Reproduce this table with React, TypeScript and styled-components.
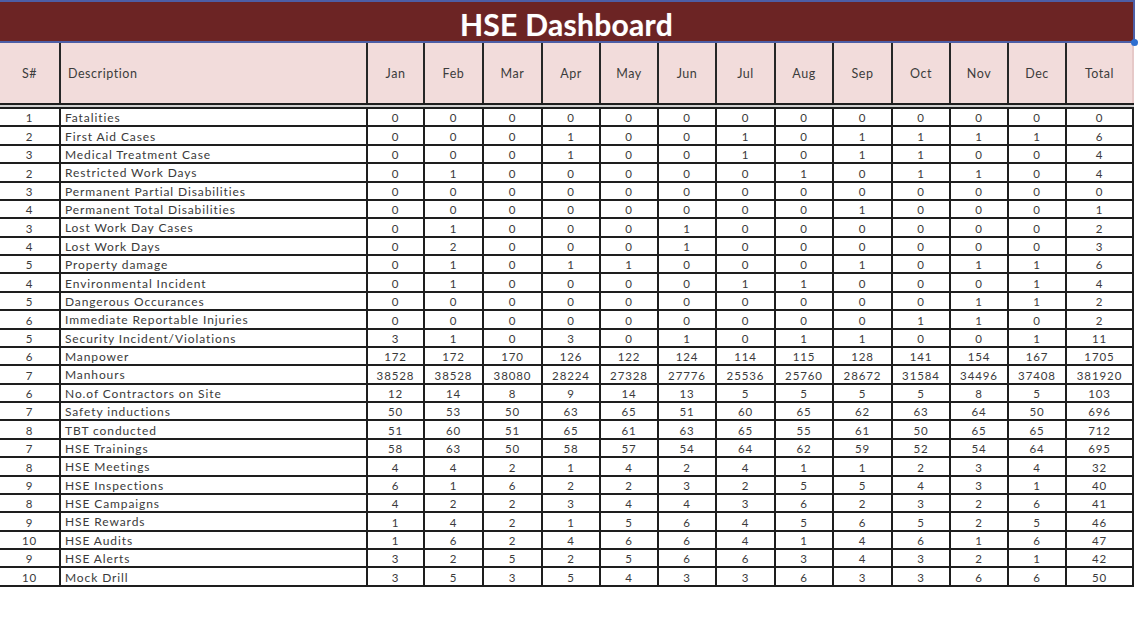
import React from "react";
import styled, { createGlobalStyle } from "styled-components";

const GlobalStyle = createGlobalStyle`
  html, body { margin: 0; padding: 0; background: #ffffff; }
  * { box-sizing: border-box; }
  body { font-family: Lato, "Open Sans", "Liberation Sans", sans-serif; }
`;

const COLS = "61px 307px 57px 59px 59px 58px 58px 58px 59px 58px 59px 58px 58px 58px 67px";

const Page = styled.div`
  position: relative;
  width: 1140px;
  height: 617px;
  background: #fff;
`;

const TitleBar = styled.div`
  width: 1135px;
  height: 43px;
  background: #6c2424;
  border-top: 2px solid #4d5ea6;
  border-bottom: 2px solid #4d5ea6;
  border-right: 2px solid #4d5ea6;
  display: flex;
  align-items: center;
  justify-content: center;
  padding-top: 4px;
  padding-left: 0;
`;

const Title = styled.h1`
  margin: 0;
  font-family: Lato, "Open Sans", sans-serif;
  font-weight: 700;
  font-size: 30px;
  color: #ffffff;
  letter-spacing: 0.3px;
  line-height: 1;
  text-shadow: 0 0 1px rgba(255, 255, 255, 0.4);
`;

const Handle = styled.span`
  position: absolute;
  left: 1131px;
  top: 39px;
  width: 7px;
  height: 7px;
  border-radius: 50%;
  background: #2f6fd0;
`;

const Table = styled.div`
  width: 1134px;
`;

const HeaderRow = styled.div`
  display: grid;
  grid-template-columns: ${COLS};
  height: 62px;
  background: #f2dcdb;
  border-bottom: 2px solid #1e1e1e;
`;

const HeadCell = styled.div<{ $left?: boolean }>`
  display: flex;
  align-items: center;
  justify-content: ${(p) => (p.$left ? "flex-start" : "center")};
  padding-left: ${(p) => (p.$left ? "7px" : "0")};
  padding-top: 1px;
  border-right: 2px solid #262626;
  font-size: 12.5px;
  letter-spacing: 0.55px;
  color: #3c3c3c;
  &:last-child { border-right: 2px solid #e6c9c8; }
`;

const Gap = styled.div`
  height: 2px;
  background: #cfcfcf;
`;

const Body = styled.div`
  border-top: 2px solid #1e1e1e;
`;

const Row = styled.div`
  display: grid;
  grid-template-columns: ${COLS};
  height: 18.38px;
  border-bottom: 2px solid #1e1e1e;
`;

const Cell = styled.div<{ $left?: boolean }>`
  display: flex;
  align-items: center;
  justify-content: ${(p) => (p.$left ? "flex-start" : "center")};
  padding-left: ${(p) => (p.$left ? "4px" : "0")};
  padding-top: 2px;
  border-right: 2px solid #1e1e1e;
  font-size: ${(p) => (p.$left ? "12px" : "11.5px")};
  letter-spacing: ${(p) => (p.$left ? "0.9px" : "0.9px")};
  color: #3a3a3a;
  white-space: nowrap;
  overflow: hidden;
  line-height: 1;
`;

const months = ["Jan", "Feb", "Mar", "Apr", "May", "Jun", "Jul", "Aug", "Sep", "Oct", "Nov", "Dec"];

type R = [number, string, number[], number];

const rows: R[] = [
  [1, "Fatalities", [0, 0, 0, 0, 0, 0, 0, 0, 0, 0, 0, 0], 0],
  [2, "First Aid Cases", [0, 0, 0, 1, 0, 0, 1, 0, 1, 1, 1, 1], 6],
  [3, "Medical Treatment Case", [0, 0, 0, 1, 0, 0, 1, 0, 1, 1, 0, 0], 4],
  [2, "Restricted Work Days", [0, 1, 0, 0, 0, 0, 0, 1, 0, 1, 1, 0], 4],
  [3, "Permanent Partial Disabilities", [0, 0, 0, 0, 0, 0, 0, 0, 0, 0, 0, 0], 0],
  [4, "Permanent Total Disabilities", [0, 0, 0, 0, 0, 0, 0, 0, 1, 0, 0, 0], 1],
  [3, "Lost Work Day Cases", [0, 1, 0, 0, 0, 1, 0, 0, 0, 0, 0, 0], 2],
  [4, "Lost Work Days", [0, 2, 0, 0, 0, 1, 0, 0, 0, 0, 0, 0], 3],
  [5, "Property damage", [0, 1, 0, 1, 1, 0, 0, 0, 1, 0, 1, 1], 6],
  [4, "Environmental Incident", [0, 1, 0, 0, 0, 0, 1, 1, 0, 0, 0, 1], 4],
  [5, "Dangerous Occurances", [0, 0, 0, 0, 0, 0, 0, 0, 0, 0, 1, 1], 2],
  [6, "Immediate Reportable Injuries", [0, 0, 0, 0, 0, 0, 0, 0, 0, 1, 1, 0], 2],
  [5, "Security Incident/Violations", [3, 1, 0, 3, 0, 1, 0, 1, 1, 0, 0, 1], 11],
  [6, "Manpower", [172, 172, 170, 126, 122, 124, 114, 115, 128, 141, 154, 167], 1705],
  [7, "Manhours", [38528, 38528, 38080, 28224, 27328, 27776, 25536, 25760, 28672, 31584, 34496, 37408], 381920],
  [6, "No.of Contractors on Site", [12, 14, 8, 9, 14, 13, 5, 5, 5, 5, 8, 5], 103],
  [7, "Safety inductions", [50, 53, 50, 63, 65, 51, 60, 65, 62, 63, 64, 50], 696],
  [8, "TBT conducted", [51, 60, 51, 65, 61, 63, 65, 55, 61, 50, 65, 65], 712],
  [7, "HSE Trainings", [58, 63, 50, 58, 57, 54, 64, 62, 59, 52, 54, 64], 695],
  [8, "HSE Meetings", [4, 4, 2, 1, 4, 2, 4, 1, 1, 2, 3, 4], 32],
  [9, "HSE Inspections", [6, 1, 6, 2, 2, 3, 2, 5, 5, 4, 3, 1], 40],
  [8, "HSE Campaigns", [4, 2, 2, 3, 4, 4, 3, 6, 2, 3, 2, 6], 41],
  [9, "HSE Rewards", [1, 4, 2, 1, 5, 6, 4, 5, 6, 5, 2, 5], 46],
  [10, "HSE Audits", [1, 6, 2, 4, 6, 6, 4, 1, 4, 6, 1, 6], 47],
  [9, "HSE Alerts", [3, 2, 5, 2, 5, 6, 6, 3, 4, 3, 2, 1], 42],
  [10, "Mock Drill", [3, 5, 3, 5, 4, 3, 3, 6, 3, 3, 6, 6], 50],
];

export default function App() {
  return (
    <>
      <GlobalStyle />
      <Page>
        <TitleBar>
          <Title>HSE Dashboard</Title>
        </TitleBar>
        <Handle />
        <Table>
          <HeaderRow>
            <HeadCell>S#</HeadCell>
            <HeadCell $left>Description</HeadCell>
            {months.map((m) => (
              <HeadCell key={m}>{m}</HeadCell>
            ))}
            <HeadCell>Total</HeadCell>
          </HeaderRow>
          <Gap />
          <Body>
            {rows.map(([sn, desc, vals, total], i) => (
              <Row key={i}>
                <Cell>{sn}</Cell>
                <Cell $left>{desc}</Cell>
                {vals.map((v, j) => (
                  <Cell key={j}>{v}</Cell>
                ))}
                <Cell>{total}</Cell>
              </Row>
            ))}
          </Body>
        </Table>
      </Page>
    </>
  );
}
